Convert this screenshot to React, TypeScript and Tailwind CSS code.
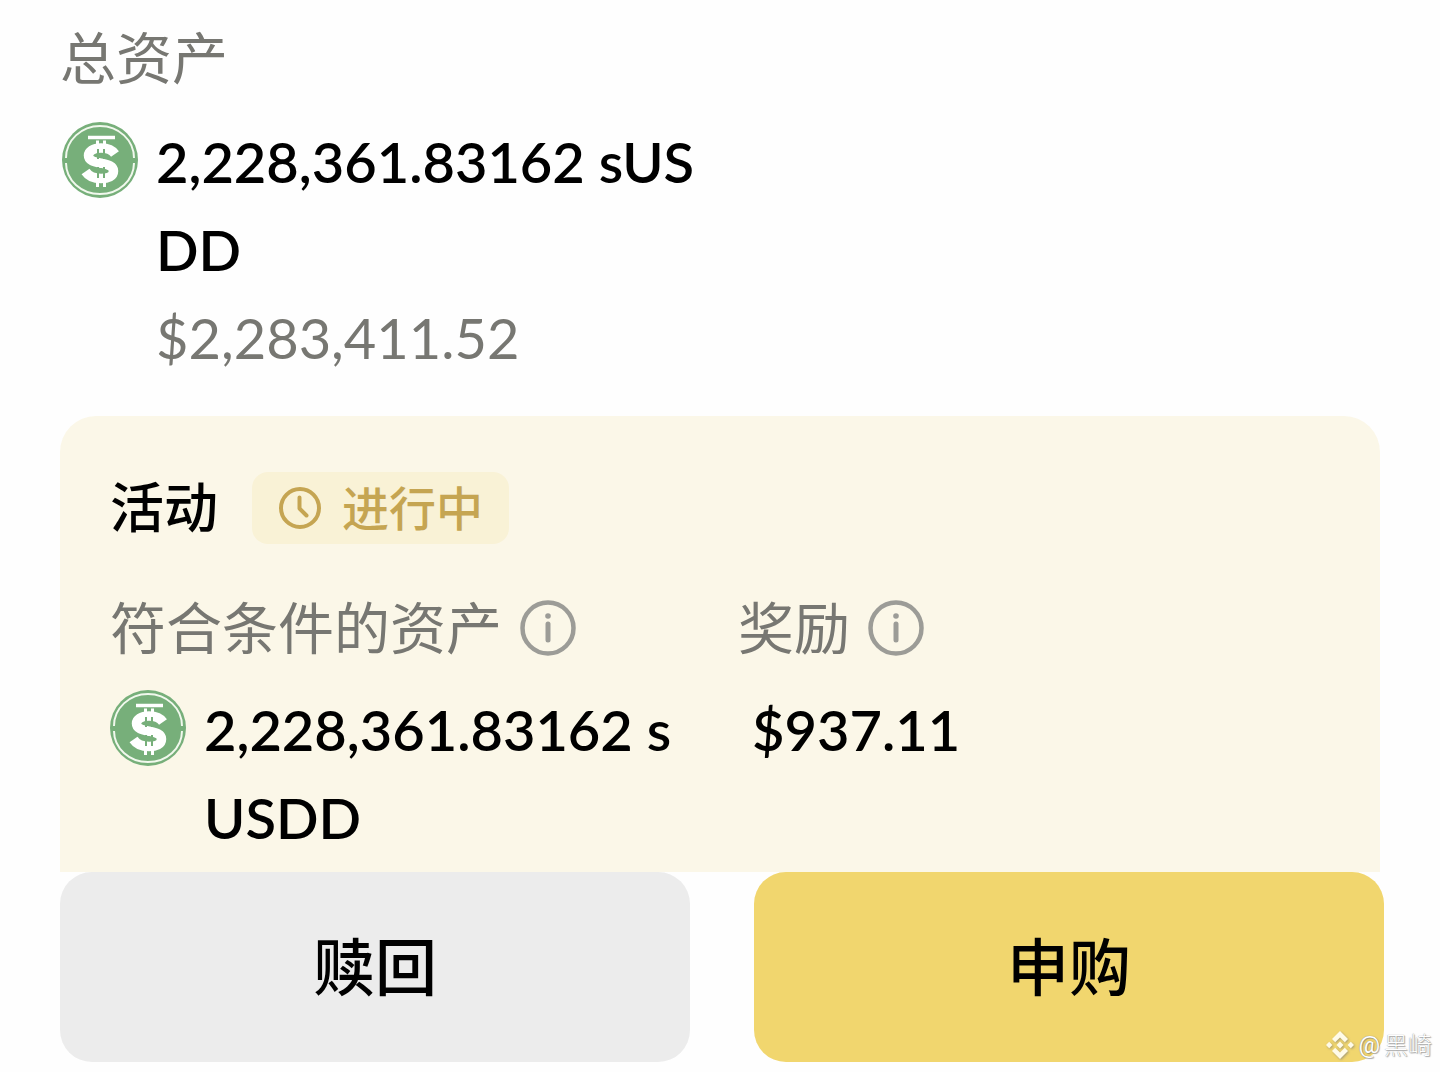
const amount = '2,228,361.83162 sUSDD';

function CoinIcon() {
  return (
    <svg viewBox="0 0 76 76" className="size-[76px] shrink-0" aria-hidden="true">
      <circle cx="38" cy="38" r="38" fill="#77af7a" />
      <g fill="none" stroke="#f1f8ed" strokeWidth="2">
        <path d="M4 36a34 32 0 0 1 68 0" />
        <path d="M4 41a34 31 0 0 0 68 0" />
      </g>
      <path d="M26 15.500h27" stroke="#fff" strokeWidth="3.500" />
      <path d="M35.500 18.500v6M42.500 18.500v6M35.500 58v7M42.500 58v7" stroke="#fff" strokeWidth="3" />
      <path
        d="M53 32C50 27.500 45 26 39 26C31 26 26.500 29.500 26.500 33.500C26.500 38.500 32 40 39 41.200C46 42.600 51.500 44 51.500 49C51.500 54.500 46 56.500 39 56.500C32 56.500 26.500 54 23.500 49.500"
        fill="none"
        stroke="#fff"
        strokeWidth="9.500"
      />
      <path d="M36 27v10M42 27v10M36 45v11M42 45v11" stroke="#77af7a" strokeWidth="2" />
    </svg>
  );
}

function InfoButton({ label }: { label: string }) {
  return (
    <button type="button" aria-label={label} className="shrink-0">
      <svg viewBox="0 0 56 56" className="size-14" aria-hidden="true">
        <circle cx="28" cy="28" r="25.500" fill="none" stroke="#9c9c97" strokeWidth="4.500" />
        <circle cx="28" cy="16" r="2.800" fill="#9c9c97" />
        <path d="M28 24v16" stroke="#9c9c97" strokeWidth="5" strokeLinecap="round" />
      </svg>
    </button>
  );
}

function ClockIcon() {
  return (
    <svg viewBox="0 0 44 44" className="size-11" fill="none" stroke="#c5a552" strokeWidth="4" strokeLinecap="round" strokeLinejoin="round" aria-hidden="true">
      <circle cx="22" cy="22" r="19" />
      <path d="M21.500 11.500v11l7 7" />
    </svg>
  );
}

function Watermark() {
  return (
    <div className="absolute right-2 bottom-3 flex items-center gap-1 text-2xl leading-8 text-white [text-shadow:1px_1px_1px_#77777799,0_0_1px_#777777]">
      <svg viewBox="0 0 28 28" className="size-7 drop-shadow-[1px_1px_1px_#77777799]" fill="#fffbe8" aria-hidden="true">
        <path d="M14 0l8 8-3.200 3.200L14 6.400l-4.800 4.800L6 8zM14 28l8-8-3.200-3.200L14 21.600l-4.800-4.800L6 20zM14 10.500l3.500 3.500-3.500 3.500-3.500-3.500zM3.200 10.800L6.400 14l-3.200 3.200L0 14zM24.800 10.800L28 14l-3.200 3.200-3.200-3.200z" />
      </svg>
      <span className="font-[Roboto,sans-serif]">@</span>
      <span className="font-light">黑崎</span>
    </div>
  );
}

export default function App() {
  return (
    <main className="relative bg-[#fefefe] pb-[11px] font-[Lato,'Noto_Sans_CJK_SC',sans-serif] text-[56px] leading-[88px] text-black">
      <section className="px-[60px] pt-3.5">
        <h1 className="text-[#777772]">总资产</h1>
        <div className="mt-4 grid grid-cols-2 gap-2">
          <div className="flex items-start gap-[18px]">
            <div className="ml-0.5 flex h-[84px] items-center">
              <CoinIcon />
            </div>
            <div className="min-w-0">
              <p className="font-semibold break-all">{amount}</p>
              <p className="text-[#777772]">$2,283,411.52</p>
            </div>
          </div>
        </div>
      </section>

      <section className="mx-[60px] mt-[34px] rounded-t-[36px] bg-[#fbf7e8] px-[50px] pt-12 pb-2.5">
        <div className="flex items-center gap-[34px]">
          <h2 className="text-[54px] leading-[88px] font-medium">活动</h2>
          <span className="flex h-[72px] items-center gap-5 rounded-2xl bg-[#f9f2d6] px-[26px] text-[47px] font-medium text-[#c5a552]">
            <ClockIcon />
            进行中
          </span>
        </div>
        <div className="mt-8 grid grid-cols-2 gap-9">
          <div>
            <div className="flex items-center gap-[18px] text-[#777772]">
              <h3>符合条件的资产</h3>
              <InfoButton label="符合条件的资产说明" />
            </div>
            <div className="mt-3.5 flex items-start gap-[18px]">
              <div className="flex h-[84px] items-center">
                <CoinIcon />
              </div>
              <p className="min-w-0 font-semibold break-all">{amount}</p>
            </div>
          </div>
          <div>
            <div className="flex items-center gap-[18px] text-[#777772]">
              <h3>奖励</h3>
              <InfoButton label="奖励说明" />
            </div>
            <p className="mt-3.5 pl-3.5 font-semibold">$937.11</p>
          </div>
        </div>
      </section>

      <div className="grid grid-cols-2 gap-16 pr-14 pl-[60px] text-[62px] font-medium">
        <button type="button" className="h-[190px] rounded-[32px] bg-[#ececec]">
          赎回
        </button>
        <button type="button" className="h-[190px] rounded-[32px] bg-[#f1d66e]">
          申购
        </button>
      </div>
      <Watermark />
    </main>
  );
}
